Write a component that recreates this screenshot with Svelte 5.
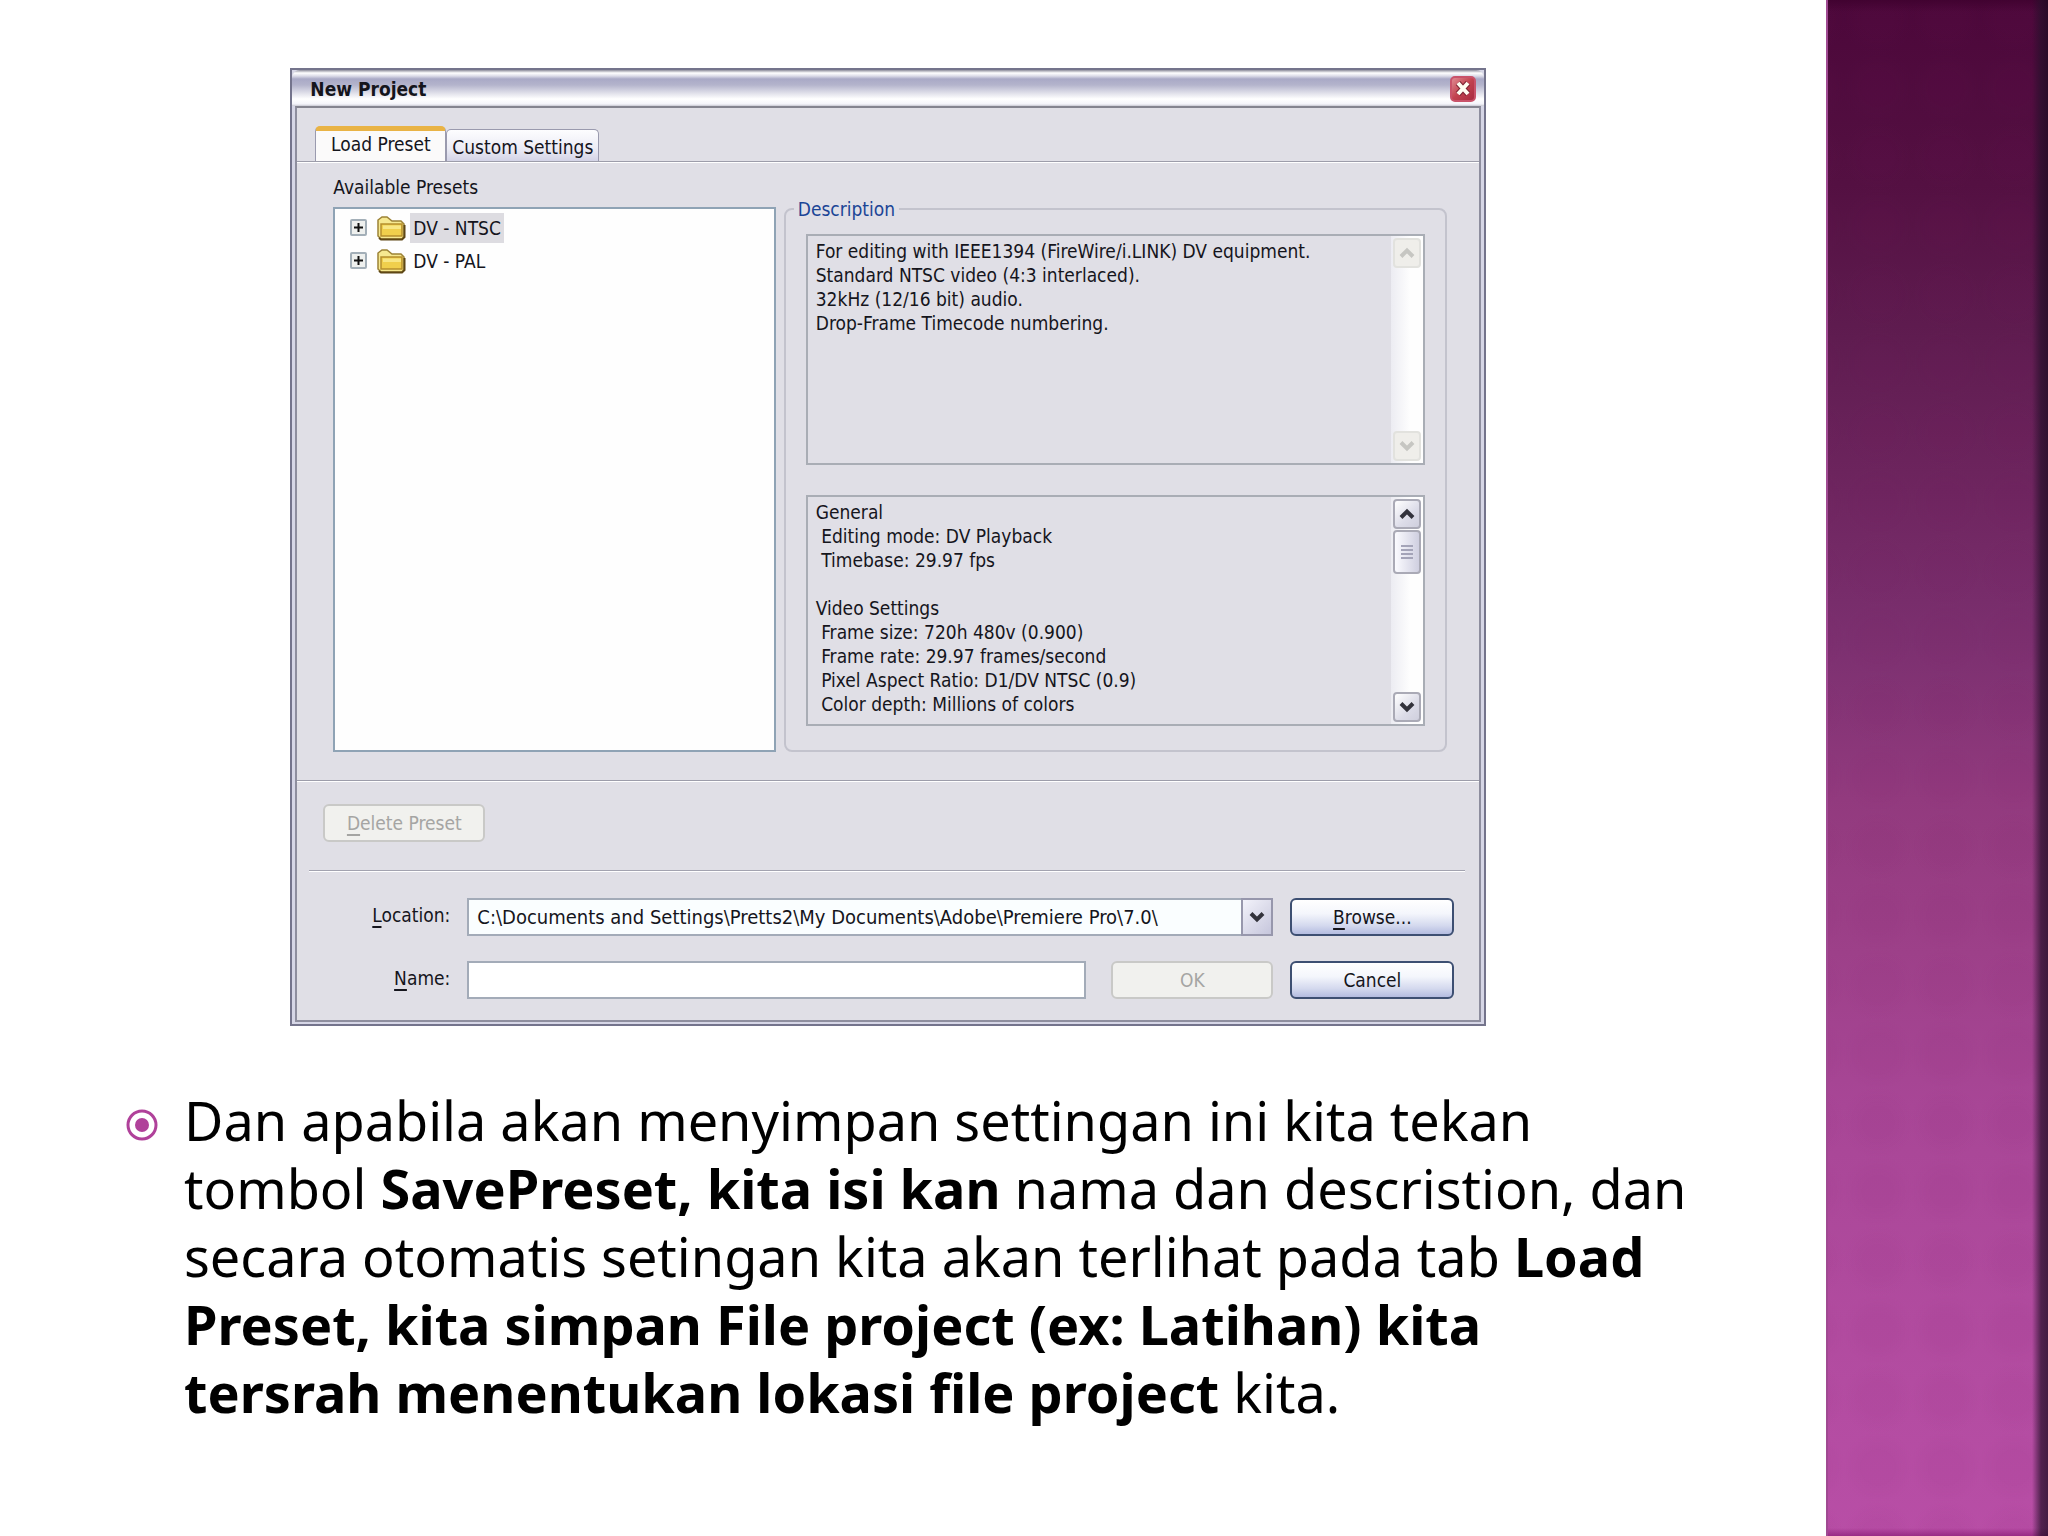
<script>
  const tabs = ['Load Preset', 'Custom Settings'];
  const presets = ['DV - NTSC', 'DV - PAL'];
  let activeTab = $state(0);
  let selected = $state(0);
  let name = $state('');

  const summary = [
    'For editing with IEEE1394 (FireWire/i.LINK) DV equipment.',
    'Standard NTSC video (4:3 interlaced).',
    '32kHz (12/16 bit) audio.',
    'Drop-Frame Timecode numbering.'
  ].join('\n');

  const details = [
    'General',
    ' Editing mode: DV Playback',
    ' Timebase: 29.97 fps',
    '',
    'Video Settings',
    ' Frame size: 720h 480v (0.900)',
    ' Frame rate: 29.97 frames/second',
    ' Pixel Aspect Ratio: D1/DV NTSC (0.9)',
    ' Color depth: Millions of colors'
  ].join('\n');
</script>

{#snippet chevron(up)}
  <svg viewBox="0 0 16 12" width="16" height="12" aria-hidden="true">
    <path d={up ? 'M2 9.5 L8 3.5 L14 9.5' : 'M2 2.5 L8 8.5 L14 2.5'} fill="none" stroke="currentColor" stroke-width="4" />
  </svg>
{/snippet}

{#snippet infoBox(text, scrollable)}
  <div class="info">
    <p>{text}</p>
    <div class="scrollbar">
      <button class="arrow" disabled={!scrollable} aria-label="Scroll up">{@render chevron(true)}</button>
      {#if scrollable}
        <div class="thumb"><i></i><i></i><i></i><i></i></div>
      {/if}
      <span class="track"></span>
      <button class="arrow" disabled={!scrollable} aria-label="Scroll down">{@render chevron(false)}</button>
    </div>
  </div>
{/snippet}

<div class="slide">
  <main>
    <section class="window" aria-label="New Project">
      <header>
        <h1>New Project</h1>
        <button class="close" aria-label="Close">
          <svg viewBox="0 0 22 22" width="22" height="22" aria-hidden="true">
            <path d="M6 5 L16 16 M16 5 L6 16" stroke="#7d2433" stroke-width="6" />
            <path d="M6 5 L16 16 M16 5 L6 16" stroke="#fffdf2" stroke-width="4" />
          </svg>
        </button>
      </header>

      <div class="body">
        <div class="tabs" role="tablist">
          {#each tabs as tab, i}
            <button role="tab" aria-selected={activeTab === i} class:active={activeTab === i} onclick={() => (activeTab = i)}>{tab}</button>
          {/each}
        </div>

        <div class="panel">
          <div class="presets">
            <h2>Available Presets</h2>
            <ul class="tree">
              {#each presets as preset, i}
                <li>
                  <button class="expand" aria-label="Expand {preset}">
                    <svg viewBox="0 0 17 17" width="17" height="17" aria-hidden="true">
                      <rect x="1" y="1" width="15" height="15" rx="1" fill="#eef0ee" stroke="#a3afb8" stroke-width="2" />
                      <path d="M4 8.5 H13 M8.5 4 V13" stroke="#111" stroke-width="2" />
                    </svg>
                  </button>
                  <svg class="folder" viewBox="0 0 30 26" width="30" height="26" aria-hidden="true">
                    <path d="M2 9 V5 L6 2 H11 L16 6 H25 L28 9 V22 L26 24 H5 L2 21 Z" fill="#f6e890" stroke="#9c8236" stroke-width="1.5" />
                    <path d="M5 9 H26 V21 H5 Z" fill="#f0cf4c" stroke="#b58f2c" stroke-width="1.5" />
                    <path d="M7 10.5 H25 V14 H7 Z" fill="#f8e684" />
                    <path d="M3 23 L5 24.5 H26 L28.5 22 V10" fill="none" stroke="#5e4715" stroke-width="2" />
                  </svg>
                  <button class="node" class:selected={selected === i} onclick={() => (selected = i)}>{preset}</button>
                </li>
              {/each}
            </ul>
          </div>

          <fieldset>
            <legend>Description</legend>
            {@render infoBox(summary, false)}
            {@render infoBox(details, true)}
          </fieldset>
        </div>

        <div class="actions">
          <button class="push" disabled><u>D</u>elete Preset</button>
        </div>
        <hr />

        <form onsubmit={(e) => e.preventDefault()}>
          <div class="row">
            <label for="location"><u>L</u>ocation:</label>
            <div class="combo">
              <select id="location">
                <option>C:\Documents and Settings\Pretts2\My Documents\Adobe\Premiere Pro\7.0\</option>
              </select>
              <span class="drop">{@render chevron(false)}</span>
            </div>
            <button type="button" class="push"><u>B</u>rowse...</button>
          </div>
          <div class="row">
            <label for="name"><u>N</u>ame:</label>
            <input id="name" type="text" bind:value={name} />
            <button class="push ok" disabled>OK</button>
            <button type="button" class="push">Cancel</button>
          </div>
        </form>
      </div>
    </section>

    <ul class="notes">
      <li>
        <svg viewBox="0 0 32 32" width="32" height="32" aria-hidden="true">
          <circle cx="16" cy="16" r="14" fill="none" stroke="#b0419a" stroke-width="3" />
          <circle cx="16" cy="16" r="7" fill="#b0419a" />
        </svg>
        <p>
          Dan apabila akan menyimpan settingan ini kita tekan<br />
          tombol <b>SavePreset, kita isi kan</b> nama dan descristion, dan<br />
          secara otomatis setingan kita akan terlihat pada tab <b>Load<br />
          Preset, kita simpan File project (ex: Latihan) kita<br />
          tersrah menentukan lokasi file project</b> kita.
        </p>
      </li>
    </ul>
  </main>
  <aside></aside>
</div>

<style>
  :global(body) {
    margin: 0;
    background: #fff;
  }

  .slide {
    display: flex;
    min-height: 100vh;
  }

  main {
    flex: 1;
    min-width: 0;
    padding: 68px 0 48px;
    box-sizing: border-box;
  }

  aside {
    width: 222px;
    flex: none;
    box-sizing: border-box;
    border-left: 2px solid #a04a92;
    background:
      linear-gradient(to right, rgba(30, 8, 36, 0) calc(100% - 16px), rgba(38, 16, 42, 0.7) calc(100% - 7px), rgba(30, 12, 34, 0.75)),
      linear-gradient(to bottom, rgba(60, 0, 44, 0.7), rgba(60, 0, 44, 0) 12px),
      linear-gradient(to top, rgba(140, 30, 120, 0.7), rgba(140, 30, 120, 0) 8px),
      radial-gradient(circle, rgba(120, 20, 95, 0.05) 16px, rgba(120, 20, 95, 0) 36px) 16px -16px / 68px 69px,
      linear-gradient(to bottom, #4c073a 0%, #541042 12%, #5f1c50 22%, #6e255f 32%, #7c3070 42%, #923a7e 52%, #9d4089 62%, #a84696 72%, #b14b9f 86%, #b84ea6 100%);
  }

  .window,
  .window button,
  .window select,
  .window input {
    font-family: 'DejaVu Sans Condensed', 'DejaVu Sans', sans-serif;
    font-size: 19px;
    line-height: 24px;
    color: #15151c;
  }

  .window {
    width: 65.5%;
    margin: 0 auto 0 15.9%;
    box-sizing: border-box;
    padding: 0 3px 2px;
    border: 2px solid #74748c;
    background: #d6d6e6;
  }

  .window button {
    margin: 0;
    padding: 0;
  }

  header {
    display: flex;
    align-items: center;
    justify-content: space-between;
    height: 36px;
    margin: 0 -3px;
    padding: 2px 8px 0 18px;
    box-sizing: border-box;
    border-radius: 8px 8px 0 0;
    background: linear-gradient(to bottom, #8d8d9c 0, #fff 3px, #dcdce8 6px, #a9a9c6 9px, #b4b4cc 15px, #dadae6 22px, #fff 29px, #f4f4fa 34px, #c8c8d2 36px);
  }

  h1 {
    margin: 0;
    font-size: 19px;
    line-height: 24px;
    font-weight: bold;
  }

  .window .close {
    display: grid;
    place-items: center;
    width: 26px;
    height: 26px;
    border: 2px solid #c9536a;
    border-radius: 5px;
    background: linear-gradient(135deg, #e08a92, #c2424f 50%, #a82c40);
  }

  .body {
    border: 2px solid #8e8e9e;
    border-top-color: #84848f;
    background: #e0dfe6;
  }

  .tabs {
    display: flex;
    align-items: flex-end;
    padding: 18px 18px 0;
  }

  .tabs button {
    width: 153px;
    height: 32px;
    border: 1px solid #9a9aae;
    border-bottom: 0;
    border-radius: 5px 5px 0 0;
    background: linear-gradient(to bottom, #fdfdff, #ececf5 60%, #d3d3e6);
    padding-top: 2px;
    white-space: nowrap;
  }

  .tabs button.active {
    width: 131px;
    height: 35px;
    padding: 0 0 4px;
    border-top: 5px solid #e9b345;
    background: #fbfafa;
  }

  .panel {
    display: grid;
    grid-template-columns: 2fr 3fr;
    gap: 8px;
    padding: 13px 32px 28px 36px;
    border-top: 1px solid #9d9daa;
    border-bottom: 1px solid #9d9daa;
    box-shadow: inset 0 1px #fff, 0 1px #fff;
  }

  .presets {
    display: flex;
    flex-direction: column;
    gap: 8px;
  }

  h2 {
    margin: 0;
    font-size: 19px;
    line-height: 24px;
    font-weight: normal;
  }

  .tree {
    flex: 1;
    margin: 0;
    padding: 2px 15px;
    border: 2px solid #8fa3b5;
    background: #fefefe;
    list-style: none;
  }

  .tree li {
    display: flex;
    align-items: center;
    height: 33px;
  }

  .window .expand {
    display: flex;
    border: 0;
    background: none;
  }

  .folder {
    margin: 0 4px 0 9px;
  }

  .window .node {
    height: 30px;
    padding: 0 3px;
    border: 0;
    background: none;
  }

  .window .node.selected {
    background: #dddce1;
  }

  fieldset {
    display: flex;
    flex-direction: column;
    gap: 30px;
    min-width: 0;
    margin: 22px 0 0;
    padding: 13px 20px 24px;
    border: 2px solid #c3c3cd;
    border-radius: 8px;
  }

  legend {
    margin-left: -12px;
    padding: 0 4px;
    color: #1b4596;
  }

  .info {
    display: flex;
    height: 231px;
    box-sizing: border-box;
    border: 2px solid #a9adb5;
  }

  .info p {
    flex: 1;
    margin: 0;
    padding: 3px 8px;
    white-space: pre-wrap;
  }

  .scrollbar {
    display: flex;
    flex-direction: column;
    gap: 1px;
    width: 28px;
    padding: 2px;
    background: linear-gradient(to right, #ececf2, #fefefe 60%);
  }

  .track {
    flex: 1;
  }

  .window .arrow,
  .thumb {
    display: flex;
    align-items: center;
    justify-content: center;
    flex: none;
    box-sizing: border-box;
    height: 30px;
    border: 2px solid #aaaab6;
    border-radius: 4px;
    background: linear-gradient(135deg, #fff, #dcdce8 60%, #cfcfdd);
    color: #33333c;
  }

  .window .arrow:disabled {
    border-color: #e2e2de;
    background: #efeeea;
    color: #c6c6c2;
  }

  .thumb {
    flex-direction: column;
    gap: 2px;
    height: 44px;
    background: linear-gradient(to right, #fbfbff, #cfcfe0);
  }

  .thumb i {
    width: 12px;
    height: 2px;
    background: #a4a4b8;
  }

  .actions {
    padding: 23px 26px 28px;
  }

  .window .push {
    box-sizing: border-box;
    flex: none;
    width: 164px;
    height: 38px;
    border: 2px solid #3d4f72;
    border-radius: 6px;
    background: linear-gradient(to bottom, #fff, #f4f6fc 40%, #d4d9ee 75%, #b4bce0);
  }

  .window .push:disabled {
    width: 162px;
    border-color: #c9c9c7;
    background: #f1f1ee;
    color: #a5a5a3;
  }

  u {
    text-underline-offset: 4px;
    text-decoration-thickness: 2px;
  }

  hr {
    margin: 0 14px 0 12px;
    border: 0;
    border-top: 1px solid #a3a3b0;
    border-bottom: 1px solid #fff;
  }

  form {
    display: flex;
    flex-direction: column;
    gap: 25px;
    padding: 26px 25px 21px 0;
  }

  .row {
    display: flex;
    gap: 17px;
  }

  label {
    width: 153px;
    text-align: right;
    padding-top: 5px;
  }

  .combo {
    display: grid;
    flex: 1;
    min-width: 0;
  }

  .combo > * {
    grid-area: 1 / 1;
  }

  select,
  input {
    box-sizing: border-box;
    min-width: 0;
    height: 38px;
    margin: 0;
    padding: 0 8px;
    border: 2px solid #a3abb8;
    border-radius: 0;
    background: #fff;
    outline: 0;
  }

  .window select {
    appearance: none;
    width: 100%;
    font-size: 20px;
    background: #fafeff;
  }

  input {
    flex: 1;
  }

  .drop {
    display: grid;
    place-items: center;
    justify-self: end;
    box-sizing: border-box;
    width: 32px;
    height: 38px;
    border: 2px solid #9797ac;
    background: linear-gradient(135deg, #f2f2fa, #c6c6dc);
    color: #33333c;
    pointer-events: none;
  }

  .window .ok {
    margin-left: 8px;
  }

  .notes {
    margin: 60px 0 0;
    padding: 0 0 0 126px;
    list-style: none;
  }

  .notes li {
    display: flex;
    gap: 26px;
  }

  .notes svg {
    flex: none;
    margin-top: 23px;
  }

  .notes p {
    margin: 0;
    font-family: 'Noto Sans', sans-serif;
    font-size: 54px;
    line-height: 68px;
    color: #000;
    white-space: nowrap;
  }
</style>
